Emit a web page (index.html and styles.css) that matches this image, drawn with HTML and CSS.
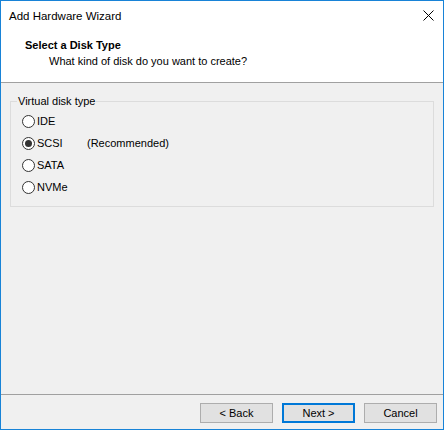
FILE: index.html
```html
<!DOCTYPE html>
<html lang="en">
<head>
    <meta charset="UTF-8">
    <meta name="viewport" content="width=device-width, initial-scale=1.0">
    <title>Add Hardware Wizard</title>
    <link rel="stylesheet" href="styles.css">
</head>
<body>
    <div class="window">
        <div class="titlebar">
            <span class="title">Add Hardware Wizard</span>
            <span class="close">
                <svg width="11" height="11" viewBox="0 0 11 11"><path d="M0.5 0.5L10.5 10.5M10.5 0.5L0.5 10.5" stroke="#000" stroke-width="1"/></svg>
            </span>
        </div>
        <div class="header">
            <h1>Select a Disk Type</h1>
            <p>What kind of disk do you want to create?</p>
        </div>
        <div class="content">
            <fieldset class="group">
                <legend>Virtual disk type</legend>
                <label class="radio"><span class="dot"></span><span class="name">IDE</span></label>
                <label class="radio"><span class="dot checked"></span><span class="name">SCSI</span>(Recommended)</label>
                <label class="radio"><span class="dot"></span><span class="name">SATA</span></label>
                <label class="radio"><span class="dot"></span><span class="name">NVMe</span></label>
            </fieldset>
        </div>
        <div class="footer">
            <button class="btn">&lt; Back</button>
            <button class="btn default">Next &gt;</button>
            <button class="btn">Cancel</button>
        </div>
    </div>
</body>
</html>
```

FILE: styles.css
```css
body {
    margin: 0;
    padding: 0;
    font-family: "Liberation Sans", Arial, sans-serif;
    font-size: 11px;
    color: #000;
}

.window {
    width: 444px;
    height: 430px;
    box-sizing: border-box;
    border: 1px solid #1883d7;
    background: #f0f0f0;
    display: grid;
    grid-template-rows: 30px 52px 1fr 35px;
}

.titlebar {
    background: #fff;
    display: flex;
    align-items: center;
    justify-content: space-between;
    padding: 0 9px 0 8px;
    line-height: 16px;
}

.title {
    font-size: 11.5px;
}

.close {
    display: flex;
    margin-top: -1px;
}

.header {
    background: #fff;
    border-bottom: 1px solid #a0a0a0;
    padding-left: 24px;
}

.header h1 {
    font-size: 11px;
    font-weight: bold;
    margin: 6px 0 0;
    line-height: 16px;
}

.header p {
    margin: 0 0 0 24px;
    line-height: 16px;
}

.content {
    padding: 11px 9px 0 9px;
}

.group {
    margin: 0;
    border: 1px solid #dcdcdc;
    padding: 2px 0 8px 11px;
}

.group legend {
    padding: 0 1px;
    margin-left: -5px;
    line-height: 14px;
}

.radio {
    display: flex;
    align-items: center;
    height: 22px;
}

.dot {
    width: 13px;
    height: 13px;
    box-sizing: border-box;
    border: 1px solid #333;
    border-radius: 50%;
    background: #fff;
    margin-right: 2px;
    position: relative;
}

.dot.checked::after {
    content: "";
    position: absolute;
    left: 2px;
    top: 2px;
    width: 7px;
    height: 7px;
    border-radius: 50%;
    background: #333;
}

.name {
    width: 50px;
}

.footer {
    border-top: 1px solid #a0a0a0;
    display: flex;
    justify-content: flex-end;
    align-items: flex-start;
    gap: 9px;
    padding: 8px 6px 0 0;
}

.btn {
    width: 73px;
    height: 20px;
    box-sizing: border-box;
    border: 1px solid #adadad;
    background: #e1e1e1;
    font-family: inherit;
    font-size: 11px;
    color: #000;
    padding: 0;
}

.btn.default {
    border: 2px solid #0078d7;
}
```
